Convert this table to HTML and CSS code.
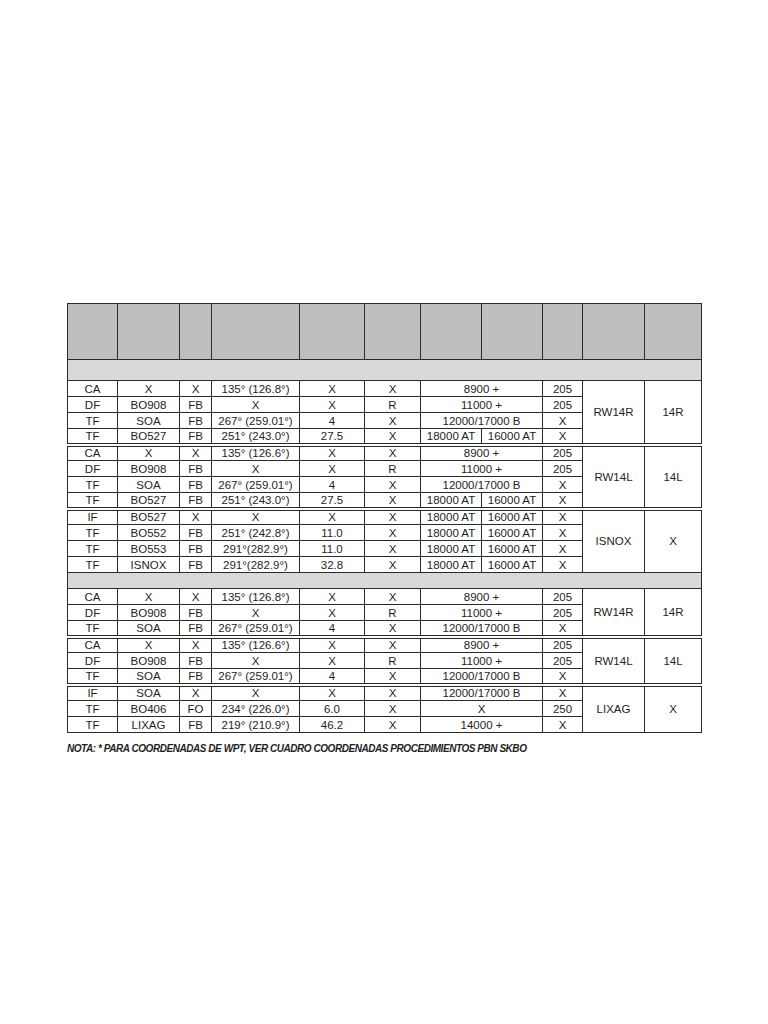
FILE: index.html
```html
<!DOCTYPE html>
<html lang="es">
<head>
<meta charset="utf-8">
<title>Tabla procedimientos</title>
<link rel="stylesheet" href="styles.css">
</head>
<body>
<div class="page">
  <table class="proc">
    <colgroup>
      <col class="w50"><col class="w62"><col class="w32"><col class="w88"><col class="w65"><col class="w56"><col class="w61"><col class="w61"><col class="w40"><col class="w62"><col class="w57">
    </colgroup>
    <thead>
      <tr class="head"><th></th><th></th><th></th><th></th><th></th><th></th><th></th><th></th><th></th><th></th><th></th></tr>
      <tr class="band1"><td colspan="11"></td></tr>
    </thead>
    <tbody>
      <tr><td>CA</td><td>X</td><td>X</td><td>135° (126.8°)</td><td>X</td><td>X</td><td colspan="2">8900 +</td><td>205</td><td rowspan="4">RW14R</td><td rowspan="4">14R</td></tr>
      <tr><td>DF</td><td>BO908</td><td>FB</td><td>X</td><td>X</td><td>R</td><td colspan="2">11000 +</td><td>205</td></tr>
      <tr><td>TF</td><td>SOA</td><td>FB</td><td>267° (259.01°)</td><td>4</td><td>X</td><td colspan="2">12000/17000 B</td><td>X</td></tr>
      <tr><td>TF</td><td>BO527</td><td>FB</td><td>251° (243.0°)</td><td>27.5</td><td>X</td><td>18000 AT</td><td>16000 AT</td><td>X</td></tr>
    </tbody>
    <tbody class="dbl">
      <tr><td>CA</td><td>X</td><td>X</td><td>135° (126.6°)</td><td>X</td><td>X</td><td colspan="2">8900 +</td><td>205</td><td rowspan="4">RW14L</td><td rowspan="4">14L</td></tr>
      <tr><td>DF</td><td>BO908</td><td>FB</td><td>X</td><td>X</td><td>R</td><td colspan="2">11000 +</td><td>205</td></tr>
      <tr><td>TF</td><td>SOA</td><td>FB</td><td>267° (259.01°)</td><td>4</td><td>X</td><td colspan="2">12000/17000 B</td><td>X</td></tr>
      <tr><td>TF</td><td>BO527</td><td>FB</td><td>251° (243.0°)</td><td>27.5</td><td>X</td><td>18000 AT</td><td>16000 AT</td><td>X</td></tr>
    </tbody>
    <tbody class="dbl">
      <tr><td>IF</td><td>BO527</td><td>X</td><td>X</td><td>X</td><td>X</td><td>18000 AT</td><td>16000 AT</td><td>X</td><td rowspan="4">ISNOX</td><td rowspan="4">X</td></tr>
      <tr><td>TF</td><td>BO552</td><td>FB</td><td>251° (242.8°)</td><td>11.0</td><td>X</td><td>18000 AT</td><td>16000 AT</td><td>X</td></tr>
      <tr><td>TF</td><td>BO553</td><td>FB</td><td>291°(282.9°)</td><td>11.0</td><td>X</td><td>18000 AT</td><td>16000 AT</td><td>X</td></tr>
      <tr><td>TF</td><td>ISNOX</td><td>FB</td><td>291°(282.9°)</td><td>32.8</td><td>X</td><td>18000 AT</td><td>16000 AT</td><td>X</td></tr>
    </tbody>
    <tbody>
      <tr class="band2"><td colspan="11"></td></tr>
    </tbody>
    <tbody>
      <tr><td>CA</td><td>X</td><td>X</td><td>135° (126.8°)</td><td>X</td><td>X</td><td colspan="2">8900 +</td><td>205</td><td rowspan="3">RW14R</td><td rowspan="3">14R</td></tr>
      <tr><td>DF</td><td>BO908</td><td>FB</td><td>X</td><td>X</td><td>R</td><td colspan="2">11000 +</td><td>205</td></tr>
      <tr><td>TF</td><td>SOA</td><td>FB</td><td>267° (259.01°)</td><td>4</td><td>X</td><td colspan="2">12000/17000 B</td><td>X</td></tr>
    </tbody>
    <tbody class="dbl">
      <tr><td>CA</td><td>X</td><td>X</td><td>135° (126.6°)</td><td>X</td><td>X</td><td colspan="2">8900 +</td><td>205</td><td rowspan="3">RW14L</td><td rowspan="3">14L</td></tr>
      <tr><td>DF</td><td>BO908</td><td>FB</td><td>X</td><td>X</td><td>R</td><td colspan="2">11000 +</td><td>205</td></tr>
      <tr><td>TF</td><td>SOA</td><td>FB</td><td>267° (259.01°)</td><td>4</td><td>X</td><td colspan="2">12000/17000 B</td><td>X</td></tr>
    </tbody>
    <tbody class="dbl">
      <tr><td>IF</td><td>SOA</td><td>X</td><td>X</td><td>X</td><td>X</td><td colspan="2">12000/17000 B</td><td>X</td><td rowspan="3">LIXAG</td><td rowspan="3">X</td></tr>
      <tr><td>TF</td><td>BO406</td><td>FO</td><td>234° (226.0°)</td><td>6.0</td><td>X</td><td colspan="2">X</td><td>250</td></tr>
      <tr><td>TF</td><td>LIXAG</td><td>FB</td><td>219° (210.9°)</td><td>46.2</td><td>X</td><td colspan="2">14000 +</td><td>X</td></tr>
    </tbody>
  </table>
  <p class="nota">NOTA: * PARA COORDENADAS DE WPT, VER CUADRO COORDENADAS PROCEDIMIENTOS PBN SKBO</p>
</div>
</body>
</html>
```

FILE: styles.css
```css
html, body {
  margin: 0;
  padding: 0;
  background: #ffffff;
}

.page {
  padding: 303px 0 0 67px;
  font-family: "Liberation Sans Narrow", "Liberation Sans", Arial, sans-serif;
  color: #1e1e1e;
}

.proc {
  border-collapse: collapse;
  table-layout: fixed;
  width: 634px;
  border: 1px solid #1c1c1c;
  font-size: 11.5px;
}

.w50 { width: 50px; }
.w62 { width: 62px; }
.w32 { width: 32px; }
.w88 { width: 88px; }
.w65 { width: 65px; }
.w56 { width: 56px; }
.w61 { width: 61px; }
.w40 { width: 40px; }
.w57 { width: 57px; }

.proc th,
.proc td {
  border: 1px solid #2a2a2a;
  padding: 0;
  text-align: center;
  vertical-align: middle;
  line-height: 12px;
  white-space: nowrap;
  overflow: hidden;
}

.proc tbody tr {
  height: 16px;
}

.head {
  height: 56px;
}

.head th {
  background: #bebebe;
}

.band1 {
  height: 21px;
}

.band1 td,
.band2 td {
  background: #d9d9d9;
}

.proc tbody tr.band2 {
  height: 16px;
}

.proc tbody.dbl {
  border-top: 4px double #2a2a2a;
}

.nota {
  margin: 10px 0 0 0;
  font-family: "Liberation Sans Narrow", "Liberation Sans", Arial, sans-serif;
  font-size: 10px;
  line-height: 12px;
  letter-spacing: -0.45px;
  font-weight: bold;
  font-style: italic;
  color: #1e1e1e;
}
```
